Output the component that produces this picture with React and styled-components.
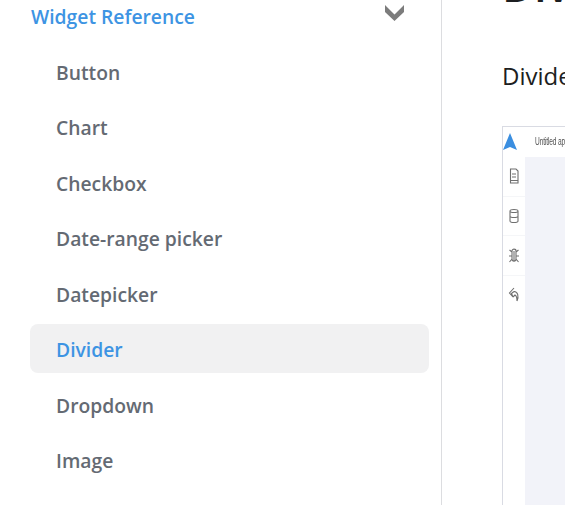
import React from "react";
import styled, { createGlobalStyle } from "styled-components";

const Global = createGlobalStyle`
  html, body { margin: 0; padding: 0; background: #fff; }
  body { font-family: "Open Sans", "Noto Sans", sans-serif; overflow: hidden; }
`;

const Page = styled.div`
  display: flex;
  width: 565px;
  height: 505px;
  overflow: hidden;
`;

const Sidebar = styled.nav`
  box-sizing: border-box;
  width: 442px;
  height: 505px;
  flex: none;
  border-right: 1px solid #dcdde0;
  padding: 0 12px 0 30px;
  overflow: hidden;
`;

const SectionHead = styled.div`
  display: flex;
  justify-content: space-between;
  align-items: flex-start;
  height: 46.5px;
  padding: 4px 0 0 1px;
  box-sizing: border-box;
`;

const SectionTitle = styled.span`
  font-size: 19.3px;
  line-height: 26px;
  font-weight: 600;
  color: #3d94e3;
`;

const Chevron = styled.svg`
  width: 19px;
  height: 16px;
  margin: 1px 25px 0 0;
  display: block;
`;

const List = styled.ul`
  list-style: none;
  margin: 0;
  padding: 0;
  display: flex;
  flex-direction: column;
  gap: 6.43px;
`;

const Item = styled.li`
  box-sizing: border-box;
  height: 49px;
  padding: 3px 0 0 26px;
  border-radius: 8px;
  display: flex;
  align-items: center;
  font-size: 19.3px;
  font-weight: 600;
  color: ${(p) => (p.$active ? "#3d94e3" : "#646a73")};
  background: ${(p) => (p.$active ? "#f1f1f2" : "transparent")};
`;

const Main = styled.main`
  flex: 1;
  min-width: 0;
  padding-left: 60px;
  overflow: hidden;
  white-space: nowrap;
`;

const Heading = styled.h1`
  margin: -45px 0 0;
  font-size: 44px;
  line-height: 60px;
  font-weight: 600;
  color: #1c1e21;
`;

const Lead = styled.p`
  margin: 45px 0 0;
  font-family: "Open Sans", sans-serif;
  font-size: 24px;
  line-height: 32px;
  font-weight: 400;
  color: #1c1e21;
`;

const Shot = styled.div`
  box-sizing: border-box;
  margin-top: 34px;
  width: 200px;
  height: 400px;
  border: 1px solid #d9dbe3;
  background: #fff;
  display: flex;
  flex-direction: column;
`;

const ShotBar = styled.div`
  height: 30px;
  flex: none;
  display: flex;
  align-items: center;
  gap: 18px;
`;

const ShotTitle = styled.span`
  display: inline-block;
  margin-top: -2px;
  font-family: "Liberation Sans", sans-serif;
  font-size: 10px;
  letter-spacing: -0.2px;
  color: #505050;
  transform: scaleX(0.66);
  transform-origin: left center;
  filter: blur(0.4px);
`;

const ShotBody = styled.div`
  flex: 1;
  display: flex;
`;

const ShotRail = styled.div`
  width: 22px;
  flex: none;
  display: flex;
  flex-direction: column;
`;

const RailCell = styled.div`
  height: 39.5px;
  flex: none;
  display: flex;
  align-items: center;
  justify-content: center;
  border-bottom: 1px solid #f5f6f8;
  box-sizing: border-box;

  &:last-child {
    border-bottom: 0;
  }
`;

const RailIcon = styled.svg`
  width: 12px;
  height: 16px;
  fill: none;
  stroke: #6f6f6f;
  stroke-width: 1.1;
  filter: blur(0.5px);
`;

const ShotCanvas = styled.div`
  flex: 1;
  background: #f2f3f9;
`;

const ArrowLogo = styled.svg`
  display: block;
  width: 14px;
  height: 18px;
  flex: none;
  filter: blur(0.3px);
`;

const items = ["Button", "Chart", "Checkbox", "Date-range picker", "Datepicker", "Divider", "Dropdown", "Image"];

export default function App() {
  return (
    <Page>
      <Global />
      <Sidebar>
        <SectionHead>
          <SectionTitle>Widget Reference</SectionTitle>
          <Chevron viewBox="0 0 19 16">
            <path d="M0 0 L9.5 9.5 L19 0 V7 L9.5 16 L0 7 Z" fill="#7c7c7c" />
          </Chevron>
        </SectionHead>
        <List>
          {items.map((t) => (
            <Item key={t} $active={t === "Divider"}>{t}</Item>
          ))}
        </List>
      </Sidebar>
      <Main>
        <Heading>Divider</Heading>
        <Lead>Divider widget</Lead>
        <Shot>
          <ShotBar>
            <ArrowLogo viewBox="0 0 14 18">
              <path d="M7 0 L14 17 L7 14 L0 17 Z" fill="#3a8ee0" />
            </ArrowLogo>
            <ShotTitle>Untitled app</ShotTitle>
          </ShotBar>
          <ShotBody>
            <ShotRail>
              <RailCell>
                <RailIcon viewBox="0 0 12 16">
                  <path d="M2.5 1 H8 L10 3 V15 H2.5 Z M4 6 H8 M4 9 H8 M3 12.5 H9.5" />
                </RailIcon>
              </RailCell>
              <RailCell>
                <RailIcon viewBox="0 0 12 16">
                  <path d="M2 3 C2 1 10 1 10 3 V13 C10 15 2 15 2 13 Z M2 3 C2 5 10 5 10 3 M2 8 C2 10 10 10 10 8" />
                </RailIcon>
              </RailCell>
              <RailCell>
                <RailIcon viewBox="0 0 12 16">
                  <path d="M4 4 C4 1.5 8 1.5 8 4 V12 C8 15 4 15 4 12 Z M4 5 L1.5 3 M8 5 L10.5 3 M4 9 H1 M8 9 H11 M4 12 L1.5 15 M8 12 L10.5 15 M6 4 V14" />
                </RailIcon>
              </RailCell>
              <RailCell>
                <RailIcon viewBox="0 0 12 16">
                  <path d="M6 1 L1.5 6 L5 10 M6 4.5 L3.5 6.5 L5 10 M6 4.5 C10 5 11 9 9 14 M5 10 L7 8 C9 9 9 11 9 14" />
                </RailIcon>
              </RailCell>
            </ShotRail>
            <ShotCanvas />
          </ShotBody>
        </Shot>
      </Main>
    </Page>
  );
}
